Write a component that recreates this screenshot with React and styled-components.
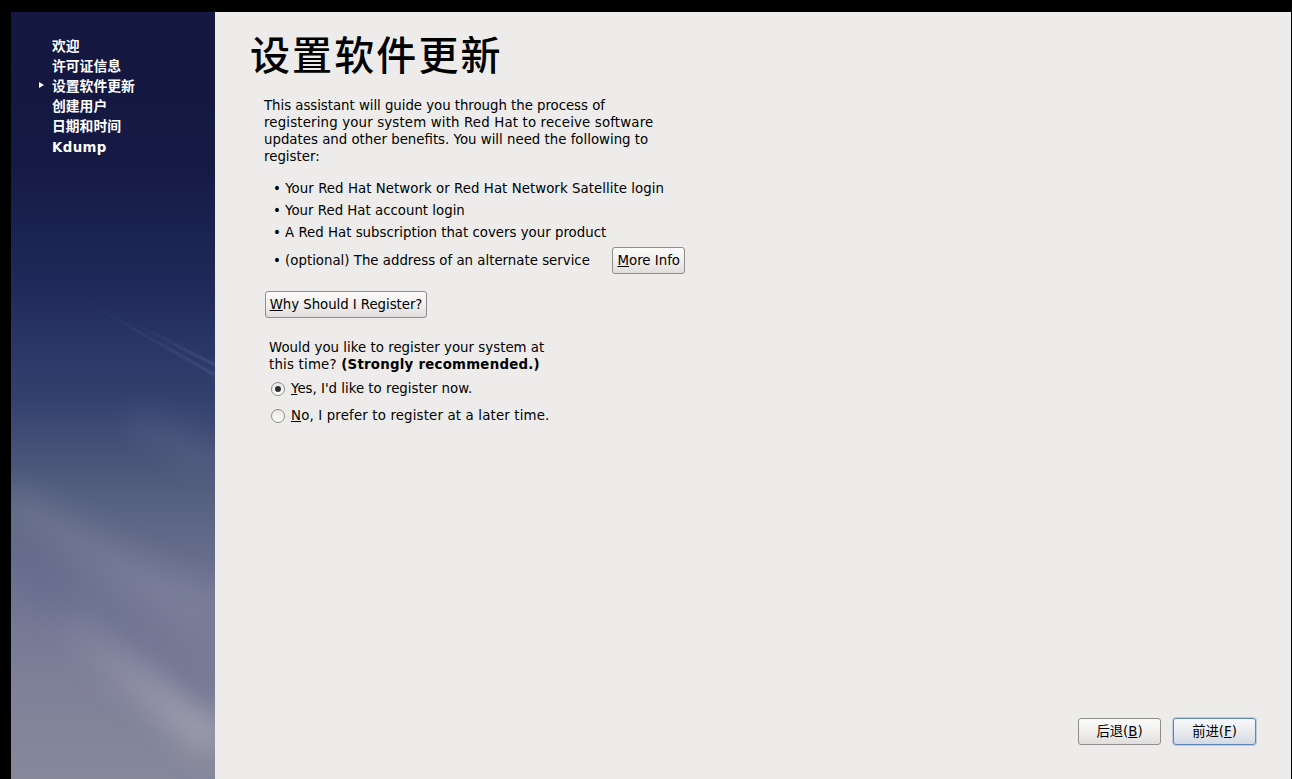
import React from "react";
import styled, { createGlobalStyle } from "styled-components";

const Global = createGlobalStyle`
  html, body { margin: 0; padding: 0; background: #000; }
  body { font-family: "DejaVu Sans", "Noto Sans CJK SC", sans-serif; font-size: 13.33px; color: #000; }
`;

const Frame = styled.div`
  width: 1292px; height: 779px; box-sizing: border-box; padding: 12px 0 0 11px;
  display: flex; background: #000; overflow: hidden;
`;
const Sidebar = styled.aside`
  position: relative; width: 204px; flex: none; overflow: hidden; box-sizing: border-box; padding-top: 24px;
  background: linear-gradient(180deg, #14173f 0%, #151a44 20%, #1f2a5a 36%, #33406e 50%, #55607f 63%, #6f7492 75%, #7f8199 88%, #86889a 100%);
`;
const Wallpaper = styled.svg`
  position: absolute; inset: 0; width: 100%; height: 100%;
`;
const Steps = styled.ul`
  position: relative; list-style: none; margin: 0; padding: 0 0 0 41px;
  color: #fff; font-weight: 700;
`;
const Step = styled.li`
  position: relative; height: 20px; line-height: 20px; font-size: 13.8px; white-space: nowrap;
`;
const KdumpStep = styled(Step)`
  margin-top: 1px; line-height: 22px; font-size: 13.33px; letter-spacing: 0.4px;
`;
const Arrow = styled.span`
  position: absolute; left: -13px; top: 6px; width: 0; height: 0;
  border-left: 5px solid #fff; border-top: 3.5px solid transparent; border-bottom: 3.5px solid transparent;
`;
const Content = styled.main`
  flex: 1; display: flex; flex-direction: column; background: #edecea; box-sizing: border-box;
  padding: 0 35px 34px 35px; border-right: 1px solid #000; line-height: 17px;
`;
const Title = styled.h1`
  margin: 15px 0 0 0; font-size: 40px; line-height: 52px; height: 52px; font-weight: 500;
  letter-spacing: 2.1px; font-family: "Noto Sans CJK SC", sans-serif; white-space: nowrap;
`;
const Body = styled.div`
  flex: 1; padding: 18px 0 0 14px;
`;
const Intro = styled.p`
  margin: 0;
`;
const Line = styled.span`
  display: block; white-space: nowrap; letter-spacing: ${p => p.$ls || 0}px;
`;
const Bullets = styled.ul`
  list-style: none; margin: 12px 0 0 0; padding: 0 0 0 9px; width: 412px;
`;
const Bullet = styled.li`
  display: flex; align-items: center; min-height: 22px; white-space: pre; letter-spacing: ${p => p.$ls || 0}px;
`;
const BulletLast = styled(Bullet)`
  justify-content: space-between; min-height: 28px; margin-top: 3px;
`;
const Btn = styled.button`
  font: inherit; color: #000; height: 27px; padding: 0 4px; box-sizing: border-box;
  border: 1px solid #8d8d8b; border-radius: 3px; background: linear-gradient(180deg, #fbfbfa 0%, #f1f0ef 50%, #dfdedc 100%);
  white-space: nowrap; line-height: 25px;
`;
const Why = styled(Btn)`
  display: block; margin: 17px 0 0 1px; width: 162px; padding: 0; letter-spacing: -0.05px;
`;
const Question = styled.p`
  margin: 21px 0 0 5px;
`;
const Strong = styled.b`
  letter-spacing: 0.25px;
`;
const ChoiceList = styled.div`
  margin-top: 2px;
`;
const Choice = styled.label`
  display: flex; align-items: center; gap: 6px; height: 27px; margin-left: 7px; letter-spacing: ${p => p.$ls || 0}px;
`;
const Radio = styled.span`
  width: 12px; height: 12px; border-radius: 50%; border: 1px solid #8a8a88; background: linear-gradient(180deg,#e9e8e6,#fff);
  display: flex; align-items: center; justify-content: center; flex: none;
  &::after { content: ""; width: 6px; height: 6px; border-radius: 50%; background: ${p => p.$on ? "#2e2e2e" : "transparent"}; }
`;
const Footer = styled.footer`
  display: flex; justify-content: flex-end; gap: 12px;
`;
const NavBtn = styled(Btn)`
  width: 83px;
  ${p => p.$primary && `
    border-color: #5f86b8;
    background: linear-gradient(180deg, #f7f8fa 0%, #e9ebef 50%, #d5d9e2 100%);
    box-shadow: 0 0 0 1px rgba(120,155,205,.4);
  `}
`;

export default function App() {
  return (
    <Frame>
      <Global />
      <Sidebar>
        <Wallpaper viewBox="0 0 204 767" preserveAspectRatio="none" aria-hidden="true">
          <defs>
            <filter id="soft" x="-40%" y="-60%" width="180%" height="220%"><feGaussianBlur stdDeviation="14" /></filter>
            <filter id="soft2" x="-20%" y="-50%" width="140%" height="200%"><feGaussianBlur stdDeviation="1.2" /></filter>
            <linearGradient id="fade" x1="0" y1="0" x2="1" y2="0">
              <stop offset="0" stopColor="#5a6d9e" stopOpacity="0" />
              <stop offset="1" stopColor="#5f72a2" stopOpacity=".5" />
            </linearGradient>
            <linearGradient id="fadeBand" gradientUnits="userSpaceOnUse" x1="56" y1="605" x2="204" y2="731">
              <stop offset="0" stopColor="#b0aebb" stopOpacity=".12" />
              <stop offset="1" stopColor="#b8b4c0" stopOpacity=".6" />
            </linearGradient>
          </defs>
          <path d="M72 288 L204 363" stroke="url(#fade)" strokeWidth="2" fill="none" filter="url(#soft2)" />
          <path d="M122 311 L204 353" stroke="url(#fade)" strokeWidth="2" fill="none" filter="url(#soft2)" />
          <path d="M122 405 L204 455" stroke="#8089a8" strokeWidth="30" opacity=".15" fill="none" filter="url(#soft)" />
          <path d="M-5 488 L204 605" stroke="#a6a6b8" strokeWidth="40" opacity=".18" fill="none" filter="url(#soft)" />
          <path d="M10 560 L204 690" stroke="#5c6488" strokeWidth="40" opacity=".3" fill="none" filter="url(#soft)" />
          <path d="M56 605 L204 731" stroke="url(#fadeBand)" strokeWidth="34" fill="none" filter="url(#soft)" />
        </Wallpaper>
        <Steps>
          <Step>欢迎</Step>
          <Step>许可证信息</Step>
          <Step><Arrow />设置软件更新</Step>
          <Step>创建用户</Step>
          <Step>日期和时间</Step>
          <KdumpStep>Kdump</KdumpStep>
        </Steps>
      </Sidebar>
      <Content>
        <Title>设置软件更新</Title>
        <Body>
          <Intro>
            <Line $ls={-0.04}>This assistant will guide you through the process of</Line>
            <Line $ls={0.16}>registering your system with Red Hat to receive software</Line>
            <Line>updates and other benefits. You will need the following to</Line>
            <Line>register:</Line>
          </Intro>
          <Bullets>
            <Bullet $ls={0.05}>{"• Your Red Hat Network or Red Hat Network Satellite login"}</Bullet>
            <Bullet>{"• Your Red Hat account login"}</Bullet>
            <Bullet>{"• A Red Hat subscription that covers your product"}</Bullet>
            <BulletLast>
              <span>{"• (optional) The address of an alternate service"}</span>
              <Btn><u>M</u>ore Info</Btn>
            </BulletLast>
          </Bullets>
          <Why><u>W</u>hy Should I Register?</Why>
          <Question>
            <Line $ls={0.02}>Would you like to register your system at</Line>
            <Line $ls={0.2}>this time? <Strong>(Strongly recommended.)</Strong></Line>
          </Question>
          <ChoiceList>
            <Choice><Radio $on /><span><u>Y</u>es, I'd like to register now.</span></Choice>
            <Choice $ls={0.16}><Radio /><span><u>N</u>o, I prefer to register at a later time.</span></Choice>
          </ChoiceList>
        </Body>
        <Footer>
          <NavBtn>后退(<u>B</u>)</NavBtn>
          <NavBtn $primary>前进(<u>F</u>)</NavBtn>
        </Footer>
      </Content>
    </Frame>
  );
}
